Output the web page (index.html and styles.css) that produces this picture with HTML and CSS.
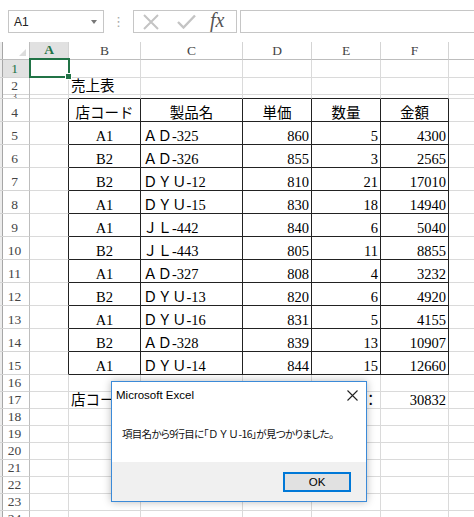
FILE: index.html
```html
<!DOCTYPE html>
<html>
<head>
  <meta charset="utf-8">
  <title>売上表 - Excel</title>
  <link rel="stylesheet" href="styles.css">
</head>
<body>
  <div class="app">
    <div class="toolbar">
      <div class="namebox"><span>A1</span><span class="caret"></span></div>
      <div class="grip">⋮</div>
      <div class="fx-buttons">
        <svg class="ico-cancel" width="16" height="16" viewBox="0 0 16 16"><path d="M1 1L15 15M15 1L1 15" stroke="#c4c4c4" stroke-width="2" fill="none"/></svg>
        <svg class="ico-enter" width="19" height="15" viewBox="0 0 19 15"><path d="M1 8L6.5 13.5L18 1.5" stroke="#c4c4c4" stroke-width="2.4" fill="none"/></svg>
        <span class="fx">fx</span>
      </div>
      <div class="formula"></div>
    </div>

    <div class="sheet">
      <div class="row colhead">
        <div class="corner"></div>
        <div class="ch sel">A</div>
        <div class="ch">B</div>
        <div class="ch">C</div>
        <div class="ch">D</div>
        <div class="ch">E</div>
        <div class="ch">F</div>
        <div class="ch"></div>
      </div>

      <div class="row r1"><div class="rh sel">1</div><div class="active"></div><div></div><div></div><div></div><div></div><div></div><div></div></div>
      <div class="row r2"><div class="rh">2</div><div></div><div>売上表</div><div></div><div></div><div></div><div></div><div></div></div>
      <div class="row r3"><div class="rh"><span class="squeezed">3</span></div><div></div><div class="tt"></div><div class="tt"></div><div class="tt"></div><div class="tt"></div><div class="tt"></div><div></div></div>

      <div class="row rt"><div class="rh">4</div><div class="tl"></div><div class="t ctr">店コード</div><div class="t ctr">製品名</div><div class="t ctr">単価</div><div class="t ctr">数量</div><div class="t ctr">金額</div><div></div></div>
      <div class="row rt"><div class="rh">5</div><div class="tl"></div><div class="t ctr">A1</div><div class="t">ＡＤ-325</div><div class="t num">860</div><div class="t num">5</div><div class="t num">4300</div><div></div></div>
      <div class="row rt"><div class="rh">6</div><div class="tl"></div><div class="t ctr">B2</div><div class="t">ＡＤ-326</div><div class="t num">855</div><div class="t num">3</div><div class="t num">2565</div><div></div></div>
      <div class="row rt"><div class="rh">7</div><div class="tl"></div><div class="t ctr">B2</div><div class="t">ＤＹＵ-12</div><div class="t num">810</div><div class="t num">21</div><div class="t num">17010</div><div></div></div>
      <div class="row rt"><div class="rh">8</div><div class="tl"></div><div class="t ctr">A1</div><div class="t">ＤＹＵ-15</div><div class="t num">830</div><div class="t num">18</div><div class="t num">14940</div><div></div></div>
      <div class="row rt"><div class="rh">9</div><div class="tl"></div><div class="t ctr">A1</div><div class="t">ＪＬ-442</div><div class="t num">840</div><div class="t num">6</div><div class="t num">5040</div><div></div></div>
      <div class="row rt"><div class="rh">10</div><div class="tl"></div><div class="t ctr">B2</div><div class="t">ＪＬ-443</div><div class="t num">805</div><div class="t num">11</div><div class="t num">8855</div><div></div></div>
      <div class="row rt"><div class="rh">11</div><div class="tl"></div><div class="t ctr">A1</div><div class="t">ＡＤ-327</div><div class="t num">808</div><div class="t num">4</div><div class="t num">3232</div><div></div></div>
      <div class="row rt"><div class="rh">12</div><div class="tl"></div><div class="t ctr">B2</div><div class="t">ＤＹＵ-13</div><div class="t num">820</div><div class="t num">6</div><div class="t num">4920</div><div></div></div>
      <div class="row rt"><div class="rh">13</div><div class="tl"></div><div class="t ctr">A1</div><div class="t">ＤＹＵ-16</div><div class="t num">831</div><div class="t num">5</div><div class="t num">4155</div><div></div></div>
      <div class="row rt"><div class="rh">14</div><div class="tl"></div><div class="t ctr">B2</div><div class="t">ＡＤ-328</div><div class="t num">839</div><div class="t num">13</div><div class="t num">10907</div><div></div></div>
      <div class="row rt"><div class="rh">15</div><div class="tl"></div><div class="t ctr">A1</div><div class="t">ＤＹＵ-14</div><div class="t num">844</div><div class="t num">15</div><div class="t num">12660</div><div></div></div>

      <div class="row rs"><div class="rh">16</div><div></div><div></div><div></div><div></div><div></div><div></div><div></div></div>
      <div class="row rs"><div class="rh">17</div><div></div><div class="spill">店コード</div><div></div><div></div><div class="num">：</div><div class="num">30832</div><div></div></div>
      <div class="row rs"><div class="rh">18</div><div></div><div></div><div></div><div></div><div></div><div></div><div></div></div>
      <div class="row rs"><div class="rh">19</div><div></div><div></div><div></div><div></div><div></div><div></div><div></div></div>
      <div class="row rs"><div class="rh">20</div><div></div><div></div><div></div><div></div><div></div><div></div><div></div></div>
      <div class="row rs"><div class="rh">21</div><div></div><div></div><div></div><div></div><div></div><div></div><div></div></div>
      <div class="row rs"><div class="rh">22</div><div></div><div></div><div></div><div></div><div></div><div></div><div></div></div>
      <div class="row rs"><div class="rh">23</div><div></div><div></div><div></div><div></div><div></div><div></div><div></div></div>
      <div class="row rs"><div class="rh">24</div><div></div><div></div><div></div><div></div><div></div><div></div><div></div></div>
    </div>

    <div class="dialog">
      <div class="dlg-title">
        <span>Microsoft Excel</span>
        <svg width="11" height="11" viewBox="0 0 11 11"><path d="M0.5 0.5L10.5 10.5M10.5 0.5L0.5 10.5" stroke="#222" stroke-width="1.1" fill="none"/></svg>
      </div>
      <div class="dlg-body">項目名から9行目に「<span class="fw">ＤＹＵ</span>-16」が見つかりました。</div>
      <div class="dlg-footer"><button class="ok">OK</button></div>
    </div>
  </div>
</body>
</html>
```

FILE: styles.css
```css
/* Excel window, sheet and message box */
html, body {
  margin: 0;
  padding: 0;
  background: #ffffff;
}

body {
  width: 474px;
  height: 517px;
  overflow: hidden;
  font-family: "Liberation Serif", "Noto Sans CJK JP", serif;
  color: #000;
}

.app {
  position: relative;
  height: 517px;
  overflow: hidden;
}

/* Name box + formula bar */
.toolbar {
  height: 42px;
  box-sizing: border-box;
  padding: 10px 0 0 8px;
  display: flex;
  align-items: flex-start;
}

.namebox {
  width: 96px;
  height: 23px;
  box-sizing: border-box;
  border: 1px solid #c6c6c6;
  display: flex;
  align-items: center;
  justify-content: space-between;
  padding: 0 6px 0 5px;
  font: 12px "Liberation Sans", sans-serif;
  color: #222;
}

.caret {
  width: 0;
  height: 0;
  border-left: 3.5px solid transparent;
  border-right: 3.5px solid transparent;
  border-top: 4px solid #777;
}

.grip {
  width: 29px;
  text-align: center;
  color: #a8a8a8;
  font: 13px/23px "DejaVu Sans", sans-serif;
}

.fx-buttons {
  width: 104px;
  height: 23px;
  box-sizing: border-box;
  border: 1px solid #c6c6c6;
  display: flex;
  align-items: center;
}

.ico-cancel {
  margin-left: 9px;
}

.ico-enter {
  margin-left: 18px;
}

.fx {
  margin-left: 14px;
  font: italic 20px/20px "Liberation Serif", serif;
  color: #555;
  margin-top: -3px;
}

.formula {
  flex: 1;
  height: 23px;
  margin-left: 3px;
  box-sizing: border-box;
  border: 1px solid #c6c6c6;
  border-right: none;
}

/* Grid */
.row {
  display: grid;
  grid-template-columns: 30px 39px 72px 102px 69px 69px 68px 1fr;
}

.colhead { height: 18px; }
.r1 { height: 18px; }
.r2 { height: 16px; }
.r3 { height: 5px; }
.rt { height: 23px; }
.rs { height: 17px; }

.row > div {
  box-sizing: border-box;
  border-right: 1px solid #dadada;
  border-bottom: 1px solid #dadada;
  display: flex;
  align-items: flex-end;
  padding: 0 2px;
  font-size: 14.5px;
  line-height: 16px;
  white-space: nowrap;
  min-width: 0;
}

.row > div:last-child {
  border-right: none;
}

.row > .ch {
  justify-content: center;
  align-items: center;
  font-size: 13.5px;
  color: #444;
  border-right-color: #d4d4d4;
  border-bottom-color: #bdbdbd;
}

.row > .ch.sel {
  background: #e1e1e1;
  color: #217346;
  font-weight: bold;
  border-bottom: 2px solid #217346;
}

.row > .corner {
  position: relative;
  border-right-color: #bdbdbd;
  border-bottom-color: #bdbdbd;
  box-shadow: inset 2px 0 0 #ececec, inset 3px 0 0 #a6a6a6;
}

.corner::after {
  content: '';
  position: absolute;
  right: 3px;
  bottom: 3px;
  width: 0;
  height: 0;
  border-left: 7px solid transparent;
  border-bottom: 7px solid #dcdcdc;
}

.row > .rh {
  justify-content: center;
  font-size: 13.5px;
  color: #444;
  overflow: hidden;
  border-right-color: #bdbdbd;
  border-bottom-color: #d4d4d4;
  box-shadow: inset 2px 0 0 #ececec, inset 3px 0 0 #a6a6a6;
}

.row > .rh.sel {
  background: #e1e1e1;
  color: #217346;
}

/* row 3 is almost hidden: only a sliver of its number shows */
.squeezed {
  font-size: 9px;
  line-height: 4px;
  height: 4px;
  overflow: hidden;
}

/* active cell A1 */
.row > .active {
  position: relative;
}

.active::before {
  content: '';
  position: absolute;
  left: -1px;
  top: -2px;
  width: 41px;
  height: 20px;
  box-sizing: border-box;
  border: 2px solid #217346;
}

.active::after {
  content: '';
  position: absolute;
  left: 36px;
  top: 14px;
  width: 5px;
  height: 5px;
  background: #217346;
  outline: 1px solid #fff;
}

/* bordered table */
.row > .t {
  border-right-color: #222;
  border-bottom-color: #222;
}

.row > .tl {
  border-right-color: #222;
}

.row > .tt {
  border-bottom-color: #222;
}

.row > .ctr {
  justify-content: center;
}

.row > .num {
  justify-content: flex-end;
}

.row > .spill {
  overflow: visible;
}

/* Message box */
.dialog {
  position: absolute;
  left: 111px;
  top: 381px;
  width: 256px;
  height: 121px;
  box-sizing: border-box;
  border: 1px solid #3b8ad8;
  background: #ffffff;
  box-shadow: 0 0 8px rgba(0, 0, 0, 0.28);
  display: flex;
  flex-direction: column;
  font-family: "Liberation Sans", "Noto Sans CJK JP", sans-serif;
}

.dlg-title {
  height: 26px;
  display: flex;
  align-items: center;
  justify-content: space-between;
  padding: 0 8px 0 4px;
  font-size: 11.5px;
  color: #000;
}

.dlg-body {
  flex: 1;
  padding: 17px 0 0 10px;
  font: 10.5px/17px "Noto Sans CJK JP", sans-serif;
  font-feature-settings: "palt";
  letter-spacing: -0.7px;
  white-space: nowrap;
  color: #111;
}

.dlg-body .fw {
  font-feature-settings: normal;
  letter-spacing: -0.3px;
}

.dlg-footer {
  height: 39px;
  box-sizing: border-box;
  background: #f0f0f0;
  display: flex;
  justify-content: flex-end;
  align-items: flex-start;
  padding: 10px 15px 0 0;
}

.ok {
  width: 68px;
  height: 20px;
  box-sizing: border-box;
  padding: 0;
  border: 2px solid #0078d7;
  background: #e1e1e1;
  font: 11.5px "Liberation Sans", sans-serif;
  color: #000;
}
```
